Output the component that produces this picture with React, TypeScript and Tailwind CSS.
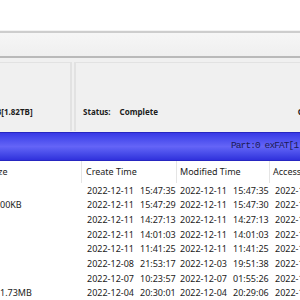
const ROWS = [
  { size: "", create: ["2022-12-11", "15:47:35"], modified: ["2022-12-11", "15:47:35"] },
  { size: "00KB", create: ["2022-12-11", "15:47:29"], modified: ["2022-12-11", "15:47:30"] },
  { size: "", create: ["2022-12-11", "14:27:13"], modified: ["2022-12-11", "14:27:13"] },
  { size: "", create: ["2022-12-11", "14:01:03"], modified: ["2022-12-11", "14:01:03"] },
  { size: "", create: ["2022-12-11", "11:41:25"], modified: ["2022-12-11", "11:41:25"] },
  { size: "", create: ["2022-12-08", "21:53:17"], modified: ["2022-12-03", "19:51:38"] },
  { size: "", create: ["2022-12-07", "10:23:57"], modified: ["2022-12-07", "01:55:26"] },
  { size: "1.73MB", create: ["2022-12-04", "20:30:01"], modified: ["2022-12-04", "20:29:06"] },
];

function Stamp({ value }: { value: string[] }) {
  return (
    <span className="flex gap-[6px]">
      <span>{value[0]}</span>
      <span>{value[1]}</span>
    </span>
  );
}

export default function App() {
  return (
    <div className="w-[300px] h-[300px] overflow-hidden bg-[#f0f0f0] text-[#1c1c1c] font-['Noto_Sans',sans-serif]">
      {/* title area */}
      <div className="h-[31px] bg-white border-b border-[#f3f3f3]" />

      {/* toolbar strip */}
      <div className="h-[27px] border-t-2 border-[#cdcdcd] border-b-2 border-b-[#b9b9b9] bg-gradient-to-b from-[#f6f6f6] to-[#efefef]" />

      {/* disk info panels */}
      <div className="flex gap-[2px] pt-[4px] h-[73px]">
        <div className="w-[72px] shrink-0 border-r-2 border-t border-[#e2e2e2] flex items-end pb-[13px] overflow-hidden">
          <span className="text-[8px] font-bold whitespace-nowrap -ml-[4px]">B[1.82TB]</span>
        </div>
        <div className="flex-1 border-l-2 border-t border-[#e2e2e2] flex items-end pb-[13px] overflow-hidden whitespace-nowrap">
          <span className="text-[8px] font-bold ml-[7px]">Status:</span>
          <span className="text-[8px] font-bold ml-[9px]">Complete</span>
          <span className="text-[8px] font-bold ml-auto -mr-[3px]">C</span>
        </div>
      </div>

      {/* partition bar */}
      <div className="mt-[1px] h-[29px] border-y border-[#2626c0] bg-gradient-to-b from-[#3838e6] via-[#6464f7] to-[#3030dc] flex items-center overflow-hidden whitespace-nowrap">
        <span className="ml-[231px] text-[9.5px] tracking-[-0.9px] text-[#1a1a55] font-['Liberation_Mono',monospace]">Part:0 exFAT[1.82TB]</span>
      </div>

      {/* file list */}
      <div className="bg-white h-[200px] text-[9px] whitespace-nowrap">
        <div className="flex h-[22px] items-center">
          <div className="w-[82px] shrink-0 h-full flex items-center border-r border-[#e5e5e5] overflow-hidden">
            <span className="-ml-[9px]">Size</span>
          </div>
          <div className="w-[95px] shrink-0 h-full flex items-center border-r border-[#e5e5e5] pl-[4px]">Create Time</div>
          <div className="w-[93px] shrink-0 h-full flex items-center border-r border-[#e5e5e5] pl-[3px]">Modified Time</div>
          <div className="flex-1 h-full flex items-center pl-[3px]">Access Time</div>
        </div>
        <div>
          {ROWS.map((r, i) => (
            <div key={i} className="flex h-[14.7px] items-center">
              <div className="w-[82px] shrink-0 overflow-hidden">{r.size}</div>
              <div className="w-[95px] shrink-0 pl-[5px]">
                <Stamp value={r.create} />
              </div>
              <div className="w-[93px] shrink-0 pl-[3px]">
                <Stamp value={r.modified} />
              </div>
              <div className="flex-1 pl-[5px]">2022-12-11</div>
            </div>
          ))}
        </div>
      </div>
    </div>
  );
}
